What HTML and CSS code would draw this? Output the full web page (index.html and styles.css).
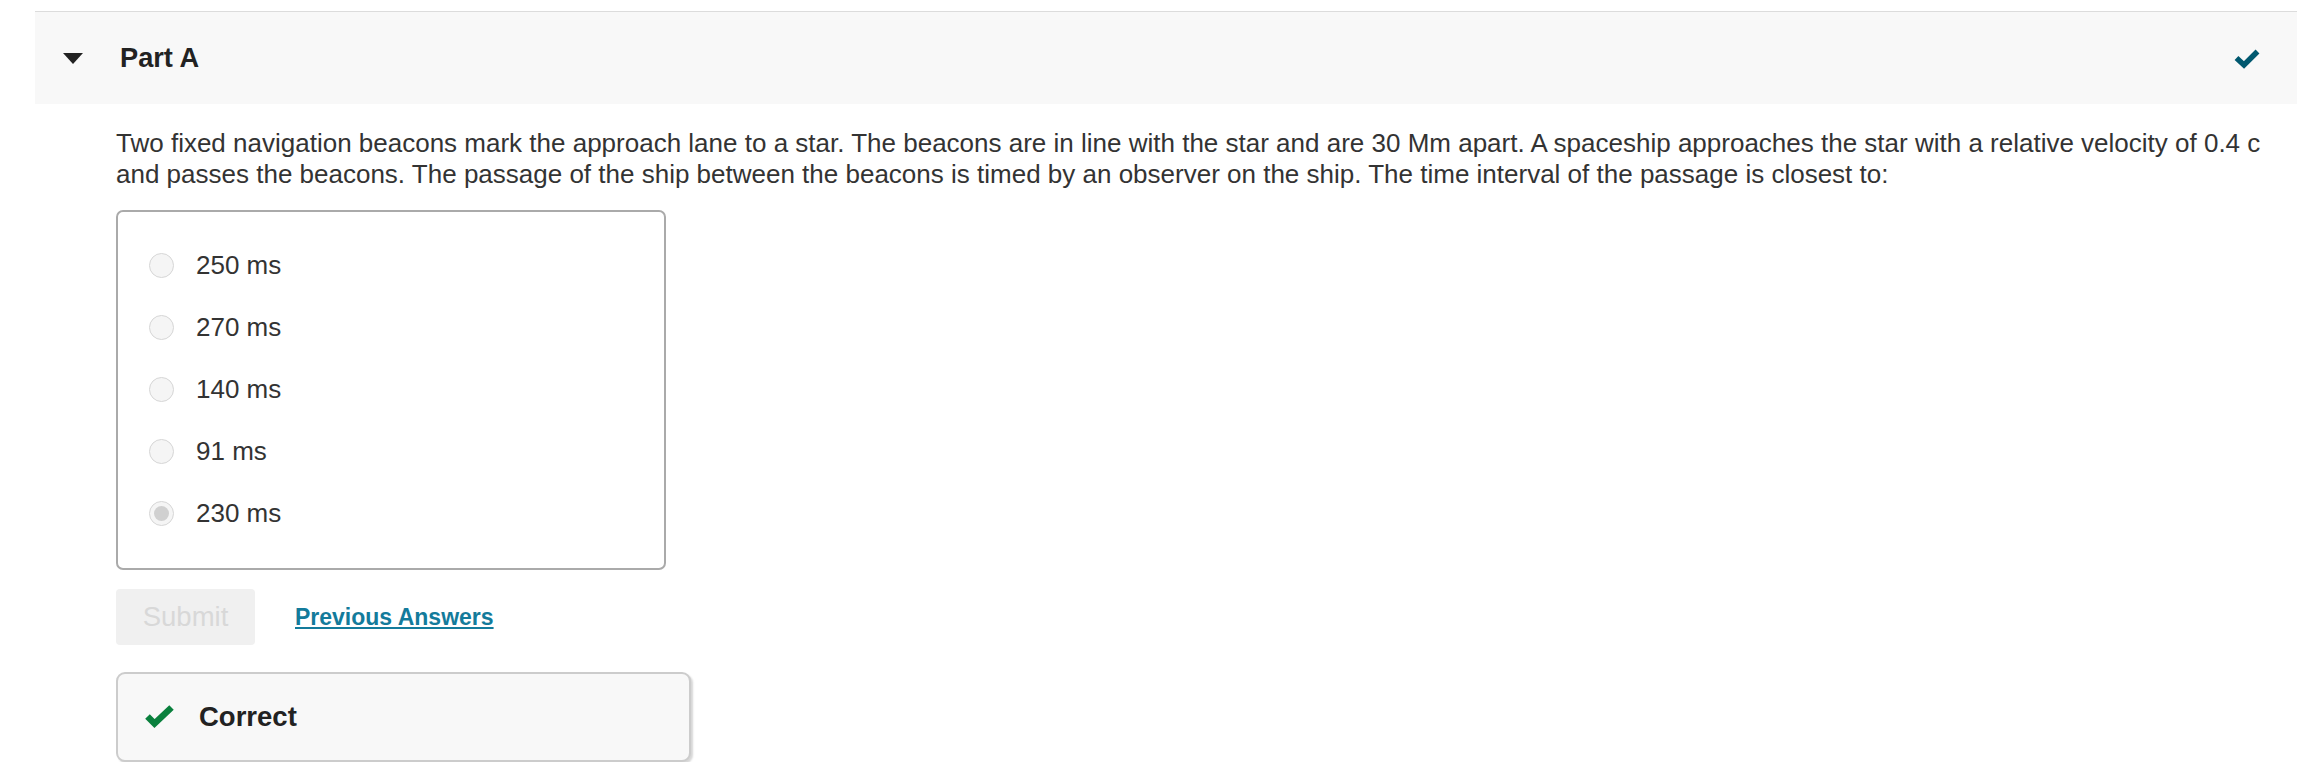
FILE: index.html
```html
<!DOCTYPE html>
<html lang="en">
<head>
<meta charset="utf-8">
<title>Part A</title>
<link rel="stylesheet" href="styles.css">
</head>
<body>
<div class="page">
  <div class="part-header">
    <span class="caret"></span>
    <h2 class="part-title">Part A</h2>
    <svg class="header-check" width="26" height="21" viewBox="0 0 26 21" aria-hidden="true">
      <polyline points="2.5,10 10,17 23.5,3.5" fill="none" stroke="#00586f" stroke-width="5.5" stroke-linejoin="miter"/>
    </svg>
  </div>
  <div class="part-body">
    <p class="question">Two fixed navigation beacons mark the approach lane to a star. The beacons are in line with the star and are 30 Mm apart. A spaceship approaches the star with a relative velocity of 0.4 c and passes the beacons. The passage of the ship between the beacons is timed by an observer on the ship. The time interval of the passage is closest to:</p>
    <div class="choices">
      <div class="choice"><span class="radio"></span><span class="label">250 ms</span></div>
      <div class="choice"><span class="radio"></span><span class="label">270 ms</span></div>
      <div class="choice"><span class="radio"></span><span class="label">140 ms</span></div>
      <div class="choice"><span class="radio"></span><span class="label">91 ms</span></div>
      <div class="choice"><span class="radio checked"></span><span class="label">230 ms</span></div>
    </div>
    <div class="actions">
      <span class="submit">Submit</span>
      <a class="prev-link" href="#">Previous Answers</a>
    </div>
    <div class="feedback">
      <svg class="feedback-check" width="30" height="24" viewBox="0 0 30 24" aria-hidden="true">
        <polyline points="2.5,11.5 9.5,18.5 26.5,2.5" fill="none" stroke="#0a803d" stroke-width="6.5" stroke-linejoin="miter"/>
      </svg>
      <span class="feedback-text">Correct</span>
    </div>
  </div>
</div>
</body>
</html>
```

FILE: styles.css
```css
* {
  box-sizing: border-box;
}

body {
  margin: 0;
  background: #ffffff;
  font-family: "Liberation Sans", Arial, sans-serif;
  color: #333333;
}

.page {
  padding-top: 11px;
  padding-left: 35px;
}

.part-header {
  display: flex;
  align-items: center;
  height: 93px;
  border-top: 1px solid #dcdcdc;
  background: #f8f8f8;
  padding-left: 28px;
  padding-right: 37px;
}

.caret {
  width: 0;
  height: 0;
  border-left: 10px solid transparent;
  border-right: 10px solid transparent;
  border-top: 11px solid #222222;
  margin-right: 37px;
}

.part-title {
  margin: 0;
  flex: 1;
  font-size: 27.2px;
  font-weight: bold;
  color: #222222;
}

.header-check {
  display: block;
}

.part-body {
  padding-left: 81px;
}

.question {
  margin: 24px 0 0 0;
  max-width: 2172px;
  font-size: 26px;
  line-height: 31px;
  color: #333333;
}

.choices {
  margin-top: 20px;
  width: 550px;
  border: 2px solid #aaaaaa;
  border-radius: 7px;
  padding: 22px 0 24px 31px;
}

.choice {
  display: flex;
  align-items: center;
  height: 62px;
}

.radio {
  width: 25px;
  height: 25px;
  border-radius: 50%;
  border: 1px solid #d6d6d6;
  background: #f5f5f5;
  margin-right: 22px;
  display: flex;
  align-items: center;
  justify-content: center;
}

.radio.checked::after {
  content: "";
  width: 15px;
  height: 15px;
  border-radius: 50%;
  background: #d0d0d0;
}

.label {
  font-size: 26px;
  line-height: 31px;
  color: #333333;
}

.actions {
  display: flex;
  align-items: center;
  margin-top: 19px;
}

.submit {
  display: flex;
  align-items: center;
  justify-content: center;
  width: 139px;
  height: 56px;
  border-radius: 4px;
  background: #f0f0f0;
  color: #d8d8d8;
  font-size: 27.5px;
}

.prev-link {
  margin-left: 40px;
  font-size: 23px;
  font-weight: bold;
  color: #137b9b;
  text-decoration: underline;
}

.feedback {
  display: flex;
  align-items: center;
  margin-top: 27px;
  width: 575px;
  height: 90px;
  border: 2px solid #cccccc;
  border-radius: 9px;
  background: #f8f8f8;
  box-shadow: 2px 2px 2px rgba(0, 0, 0, 0.16);
  padding-left: 27px;
}

.feedback-check {
  display: block;
  margin-right: 24px;
}

.feedback-text {
  font-size: 27.5px;
  font-weight: bold;
  color: #222222;
}
```
